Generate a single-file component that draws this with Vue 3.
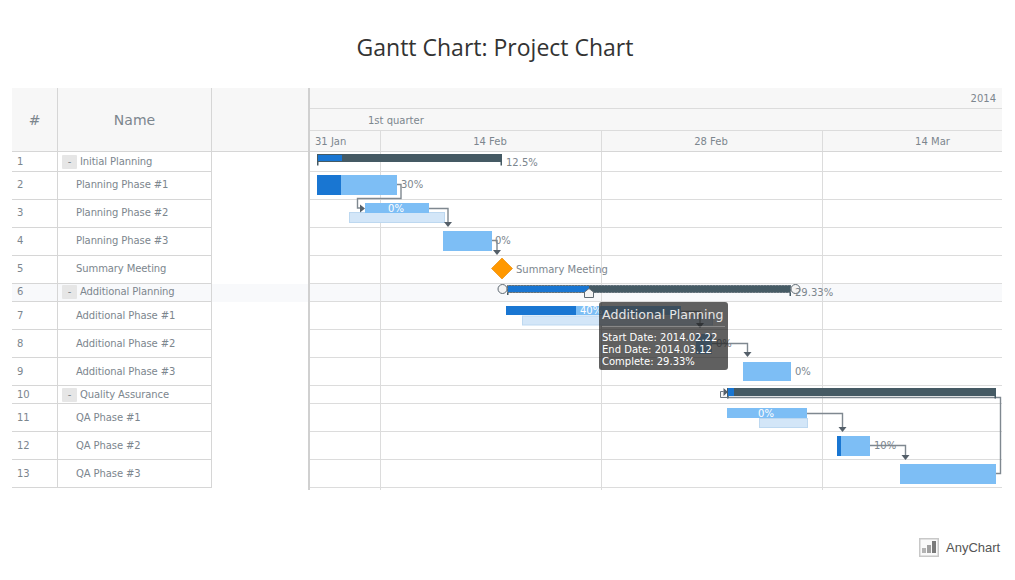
<script setup>
const rows = [
  { n: 1, name: 'Initial Planning', h: 20, group: true },
  { n: 2, name: 'Planning Phase #1', h: 28, lift: true },
  { n: 3, name: 'Planning Phase #2', h: 28, lift: true },
  { n: 4, name: 'Planning Phase #3', h: 28, lift: true },
  { n: 5, name: 'Summary Meeting', h: 28, lift: true },
  { n: 6, name: 'Additional Planning', h: 18, group: true, hover: true, lift: true },
  { n: 7, name: 'Additional Phase #1', h: 28 },
  { n: 8, name: 'Additional Phase #2', h: 28 },
  { n: 9, name: 'Additional Phase #3', h: 28 },
  { n: 10, name: 'Quality Assurance', h: 18, group: true },
  { n: 11, name: 'QA Phase #1', h: 28 },
  { n: 12, name: 'QA Phase #2', h: 28 },
  { n: 13, name: 'QA Phase #3', h: 28 }
]
let acc = 152
const lines = rows.map(r => { acc += r.h; return acc - 0.5 })
const bars = [
  [317, 175, 80, 20], [365, 203, 64, 10], [443, 231, 49, 20], [506, 306, 175, 9],
  [696, 334, 16, 20], [743, 362, 48, 19], [727, 408, 80, 10], [837, 436, 33, 20], [900, 464, 96, 20]
]
const progress = [[317, 175, 24, 20], [506, 306, 70, 9], [837, 436, 4, 20]]
const baselines = [[349, 212.5, 95, 10], [522, 316, 190, 9], [759, 418.5, 48, 9]]
const links = [
  'M397 184.5H401V198.5H357.5V208H361', 'M429 208.5H448V222', 'M492 240.5H497V251',
  'M681 311.5H700V323', 'M712 343.5H747.5V353', 'M807 413.5H842.5V428',
  'M870 445.5H905.5V456', 'M996 473.5H1000.5V397.5H728V391'
]
const downs = [[448, 222], [497, 250], [700, 323], [747.5, 352], [842.5, 427], [905.5, 455]]
const tipLines = ['Start Date: 2014.02.22', 'End Date: 2014.03.12', 'Complete: 29.33%']
</script>

<template>
  <div class="page">
    <h1 class="title">Gantt Chart: Project Chart</h1>
    <div class="chart">
      <div class="grid">
        <div class="ghead">
          <div class="hcell num">#</div>
          <div class="hcell name">Name</div>
          <div class="hcell fill"></div>
        </div>
        <div v-for="r in rows" :key="r.n" class="row" :class="{ hover: r.hover, lift: r.lift }" :style="{ height: r.h + 'px' }">
          <div class="cell c-num">{{ r.n }}</div>
          <div class="cell c-name" :class="{ group: r.group }">
            <span v-if="r.group" class="toggle">-</span>
            <span>{{ r.name }}</span>
          </div>
          <div class="c-fill"></div>
        </div>
      </div>
      <div class="timeline">
        <div class="trow t1"><span>2014</span></div>
        <div class="trow t2"><span>1st quarter</span></div>
        <div class="trow t3">
          <div class="tick w1"><span class="left">31 Jan</span></div>
          <div class="tick w2">14 Feb</div>
          <div class="tick w2">28 Feb</div>
          <div class="tick w3">14 Mar</div>
        </div>
        <svg class="plot" width="692" height="338" viewBox="310 152 692 338">
          <rect x="310" y="284" width="692" height="18" fill="#f8f9fb" />
          <path v-for="y in [380.5, 601.5, 822.5]" :key="y" :d="`M${y} 152V490`" stroke="#dcdcdc" fill="none" />
          <path v-for="y in lines" :key="y" :d="`M310 ${y}H1002`" stroke="#dcdcdc" fill="none" />

          <rect v-for="b in baselines" :key="b[0]" :x="b[0] + .5" :y="b[1]" :width="b[2]" :height="b[3]" fill="#d3e6f8" stroke="#bdd8f0" />
          <rect v-for="b in bars" :key="b[0]" :x="b[0]" :y="b[1]" :width="b[2]" :height="b[3]" fill="#7dbef5" />
          <rect v-for="b in progress" :key="b[0]" :x="b[0]" :y="b[1]" :width="b[2]" :height="b[3]" fill="#1976d2" />

          <path v-for="l in links" :key="l" :d="l" fill="none" stroke="#7f8890" stroke-width="1.4" />
          <path v-for="d in downs" :key="d[0]" :d="`M${d[0] - 4} ${d[1]}h8l-4 5z`" fill="#545f69" />
          <path d="M360 204.500l5 4l-5 4z" fill="#545f69" />

          <!-- summary tasks -->
          <g fill="#455a64">
            <rect x="317" y="154" width="185" height="8" />
            <rect x="727" y="388" width="269" height="8" />
            <rect x="507" y="285" width="284" height="8" />
            <path d="M317 154h1.500v11.500h-1.500zM500.500 154h1.500v11.500h-1.500zM727 388h1.500v10.500h-1.500zM994.500 388h1.500v10.500h-1.500zM507 285h1.500v10h-1.500zM789.500 285h1.500v11h-1.500z" />
          </g>
          <rect x="318" y="155" width="24" height="6" fill="#1976d2" />
          <rect x="728" y="388" width="6" height="8" fill="#1976d2" />
          <rect x="508" y="286" width="81" height="6" fill="#1976d2" />
          <rect x="507.500" y="285.500" width="283" height="7" fill="none" stroke="#7f8890" stroke-dasharray="2 1" />

          <!-- milestone -->
          <path d="M502 258l10.500 10.500L502 279l-10.500-10.500z" fill="#ff9800" stroke="#f0a030" />

          <!-- edit controls -->
          <circle cx="502.500" cy="289" r="4.500" fill="#f4f4f4" stroke="#5f6a73" />
          <circle cx="795.500" cy="289" r="4.500" fill="#f4f4f4" stroke="#5f6a73" />
          <path d="M589 288.500l4.500 3.500v5.500h-9V292z" fill="#f4f4f4" stroke="#5f6a73" />
          <path d="M723.500 391.500h-3v6h7" fill="#f4f4f4" stroke="#6b7680" />
          <path d="M723.500 388l4.500 4l-4.500 4z" fill="#545f69" />

          <g class="lbl">
            <text x="506" y="166">12.5%</text>
            <text x="401" y="188">30%</text>
            <text x="495" y="244">0%</text>
            <text x="516" y="273">Summary Meeting</text>
            <text x="795" y="296">29.33%</text>
            <text x="716" y="347">0%</text>
            <text x="795" y="375">0%</text>
            <text x="874" y="449">10%</text>
          </g>
          <g class="lbl white">
            <text x="396" y="212" text-anchor="middle">0%</text>
            <text x="580" y="314">40%</text>
            <text x="766" y="417" text-anchor="middle">0%</text>
          </g>
        </svg>
        <div class="tooltip">
          <div class="tip-title">Additional Planning</div>
          <div class="tip-body">
            <div v-for="t in tipLines" :key="t">{{ t }}</div>
          </div>
        </div>
      </div>
    </div>
    <div class="credit">
      <svg width="20" height="19" viewBox="0 0 20 19">
        <rect x=".75" y=".75" width="18.500" height="17.500" fill="#fafafa" stroke="#c8c8c8" stroke-width="1.500" />
        <rect x="3" y="10" width="4" height="5" fill="#b4b4b4" />
        <rect x="8" y="7" width="4" height="8" fill="#a0a0a0" />
        <rect x="13" y="3" width="4" height="12" fill="#7a7a7a" />
      </svg>
      <span>AnyChart</span>
    </div>
  </div>
</template>

<style>
html, body { margin: 0; background: #fff; }
</style>

<style scoped>
.page {
  width: 1015px;
  height: 580px;
  overflow: hidden;
  font-family: "DejaVu Sans", Verdana, sans-serif;
  color: #7c868e;
}
.title {
  margin: 0;
  height: 88px;
  box-sizing: border-box;
  padding: 30px 25px 0 0;
  text-align: center;
  font: 400 23px/35px "Open Sans", sans-serif;
  color: #333;
}
.chart {
  display: flex;
  margin-left: 12px;
  width: 990px;
  height: 402px;
}
.grid {
  width: 298px;
  flex: none;
  box-sizing: border-box;
  border-right: 2px solid #d0d0d0;
}
.ghead {
  display: flex;
  height: 64px;
  box-sizing: border-box;
  background: #f7f7f7;
  border-bottom: 1px solid #d6d6d6;
}
.hcell {
  display: flex;
  align-items: center;
  justify-content: center;
  box-sizing: border-box;
}
.num { width: 46px; border-right: 1px solid #d6d6d6; font-size: 14px; }
.name { width: 154px; border-right: 1px solid #d6d6d6; font-size: 14px; }
.fill { flex: 1; }
.row { display: flex; font-size: 10px; letter-spacing: -.1px; }
.cell {
  box-sizing: border-box;
  display: flex;
  align-items: center;
  border-bottom: 1px solid #d6d6d6;
  border-right: 1px solid #d6d6d6;
}
.lift .cell { padding-bottom: 2px; }
.c-num { width: 46px; padding-left: 5px; }
.c-name { width: 154px; padding-left: 18px; gap: 3px; }
.c-name.group { padding-left: 4px; }
.c-fill { flex: 1; }
.hover { background: #f8f9fb; }
.toggle {
  width: 15px;
  height: 14px;
  background: #e6e6e6;
  border-radius: 1px;
  display: flex;
  align-items: center;
  justify-content: center;
}
.timeline { position: relative; flex: 1; min-width: 0; font-size: 10px; }
.trow { display: flex; box-sizing: border-box; background: #f7f7f7; border-bottom: 1px solid #dcdcdc; align-items: center; overflow: hidden; }
.t1 { height: 21px; justify-content: flex-end; padding-right: 6px; }
.t2 { height: 22px; padding: 2px 0 0 58px; }
.t3 { height: 21px; border-bottom-color: #d6d6d6; }
.tick {
  box-sizing: border-box;
  height: 100%;
  flex: none;
  display: flex;
  align-items: center;
  justify-content: center;
  border-right: 1px solid #dcdcdc;
}
.tick:last-child { border-right: 0; }
.w1 { width: 71px; justify-content: flex-start; padding-left: 5px; }
.w2 { width: 221px; padding-right: 2px; }
.w3 { width: 221px; padding-right: 2px; }
.plot { display: block; }
.lbl { font-size: 10px; fill: #7c868e; }
.white { fill: #fff; }
.tooltip {
  position: absolute;
  left: 289px;
  top: 214px;
  width: 129px;
  height: 68px;
  box-sizing: border-box;
  padding: 4px 0 0 3px;
  background: rgba(35, 35, 35, .72);
  border-radius: 3px;
  color: #fff;
  white-space: nowrap;
}
.tip-title {
  font-size: 12.600px;
  line-height: 18px;
  padding-bottom: 2px;
  margin: 0 3px 5px 0;
  border-bottom: 1px solid rgba(255, 255, 255, .25);
  color: #e6e6e6;
}
.tip-body { font-size: 10px; line-height: 12px; }
.credit {
  display: flex;
  align-items: center;
  gap: 7px;
  margin: 48px 0 0 919px;
  font: 13px "Liberation Sans", sans-serif;
  color: #555;
}
</style>
